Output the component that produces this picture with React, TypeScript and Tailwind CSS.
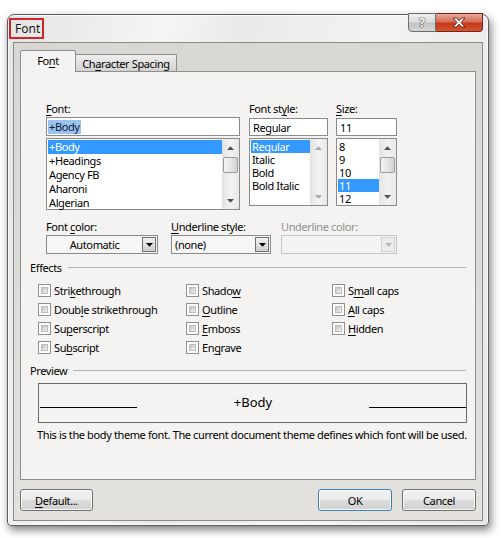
import React from "react";

type Kids = { children?: React.ReactNode };

// underlined access key letter
const Acc = ({ children }: Kids) => (
  <span className="underline decoration-1 underline-offset-[2px]">{children}</span>
);

function Arrow({ up, color = "#000" }: { up?: boolean; color?: string }) {
  return (
    <svg width="7" height="4" viewBox="0 0 7 4" className="block">
      <path d={up ? "M0 4H7L3.5 0.3Z" : "M0 0H7L3.5 3.7Z"} fill={color} />
    </svg>
  );
}

function ScrollBar({ thumb, disabled }: { thumb?: boolean; disabled?: boolean }) {
  const c = disabled ? "#a8a8a8" : "#505050";
  return (
    <div className="w-[17px] flex flex-col bg-gradient-to-r from-[#e3e3e3] via-[#f2f2f2] to-[#e9e9e9]">
      <div className="h-[17px] flex items-center justify-center">
        <Arrow up color={c} />
      </div>
      {thumb && (
        <div className="mx-px mt-px h-[16px] rounded-[2px] border border-[#9a9a9a] bg-gradient-to-r from-[#f4f4f4] via-[#e6e6e6] to-[#d3d3d3]" />
      )}
      <div className="flex-1" />
      <div className="h-[17px] flex items-center justify-center">
        <Arrow color={c} />
      </div>
    </div>
  );
}

function ListBox({
  items,
  selected,
  rowClass,
  boxClass,
  thumb,
  disabled,
}: {
  items: string[];
  selected: number;
  rowClass: string;
  boxClass: string;
  thumb?: boolean;
  disabled?: boolean;
}) {
  return (
    <div className={`flex border border-[#8a8a8a] bg-white mt-[2px] ${boxClass}`}>
      <div className="flex-1 flex flex-col pt-px">
        {items.map((it, i) => (
          <div
            key={it}
            className={`${rowClass} ml-px pl-[1px] flex items-center whitespace-nowrap ${
              i === selected ? "bg-[#3399ff] text-white" : ""
            }`}
          >
            {it}
          </div>
        ))}
      </div>
      <ScrollBar thumb={thumb} disabled={disabled} />
    </div>
  );
}

function Combo({
  text,
  center,
  disabled,
  className,
}: {
  text?: string;
  center?: boolean;
  disabled?: boolean;
  className: string;
}) {
  return (
    <div
      className={`h-[19px] flex items-center border ${
        disabled ? "border-[#c6c6c6] bg-[#f3f3f3]" : "border-[#8a8a8a] bg-[#f6f6f6]"
      } ${className}`}
    >
      <div className={`flex-1 px-[3px] ${center ? "text-center" : ""}`}>{text}</div>
      <div
        className={`mr-px w-[14px] h-[15px] flex items-center justify-center border ${
          disabled
            ? "border-[#d2d2d2] bg-[#ececec]"
            : "border-[#707070] bg-gradient-to-b from-[#f3f3f3] to-[#cdcdcd]"
        }`}
      >
        <Arrow color={disabled ? "#b4b4b4" : "#000"} />
      </div>
    </div>
  );
}

function Check({ children }: Kids) {
  return (
    <div className="h-[19px] flex items-center">
      <span className="w-[13px] h-[13px] border border-[#8e8f8f] bg-white p-[2px] flex">
        <span className="flex-1 border border-[#bdbdbd] bg-gradient-to-br from-[#c2c2c2] to-[#f2f2f2]" />
      </span>
      <span className="ml-[3px]">{children}</span>
    </div>
  );
}

function GroupHead({ title, className }: { title: string; className: string }) {
  return (
    <div className={`h-[13px] flex items-center pl-[9px] pr-[9px] ${className}`}>
      <span>{title}</span>
      <span className="flex-1 ml-[6px] h-px bg-[#b2b2b2]" />
    </div>
  );
}

function Button({ children, className }: Kids & { className: string }) {
  return (
    <div
      className={`h-[22px] flex items-center justify-center rounded-[3px] border shadow-[inset_0_0_0_1px_rgba(255,255,255,0.85)] bg-[linear-gradient(#f2f2f2_0%,#ebebeb_48%,#dddddd_52%,#cfcfcf_100%)] ${className}`}
    >
      {children}
    </div>
  );
}

export default function App() {
  return (
    <div className="w-[501px] h-[538px] bg-white pl-[7px] pt-[14px] font-['Segoe_UI','Noto_Sans',sans-serif] text-[11px] leading-[13px] tracking-[-0.38px] text-black">
      {/* window frame */}
      <div className="w-[482px] h-[512px] flex flex-col rounded-t-[7px] rounded-b-[4px] border border-[#5c5c5c] px-[5px] pb-[4px] bg-[linear-gradient(100deg,#e4e4e4_0%,#f5f5f5_28%,#e9e9e9_42%,#f3f3f3_66%,#e6e6e6_100%)] shadow-[inset_0_0_0_1px_rgba(255,255,255,0.75),2px_4px_8px_rgba(0,0,0,0.5)]">
        {/* title bar */}
        <div className="h-[27px] flex items-start justify-between">
          <div className="-ml-[4px] mt-[3px] w-[35px] h-[21px] border-2 border-[#d4242a] flex items-center pl-[4px] text-[12px] tracking-normal text-[#1a1a1a]">
            Font
          </div>
          <div className="-mt-[2px] flex">
            <div className="w-[28px] h-[19px] flex items-center justify-center rounded-bl-[4px] border border-[#6b6b6b] bg-[linear-gradient(#eeeeee_0%,#dcdcdc_45%,#c2c2c2_55%,#d6d6d6_100%)] text-[13px] font-bold text-white [text-shadow:0_0_1px_#333,0_0_1px_#333,0_0_1px_#333]">
              ?
            </div>
            <div className="w-[47px] h-[19px] flex items-center justify-center rounded-br-[4px] border border-l-0 border-[#6b2a1e] bg-[linear-gradient(#e9a999_0%,#d66e55_45%,#c2391c_55%,#d9532d_100%)]">
              <svg width="14" height="11" viewBox="0 0 14 11">
                <path
                  d="M1 1H4.5L7 3.8L9.5 1H13L9 5.5L13 10H9.5L7 7.2L4.5 10H1L5 5.5Z"
                  fill="#fff"
                  stroke="#5e1d12"
                  strokeWidth="0.9"
                  strokeLinejoin="round"
                />
              </svg>
            </div>
          </div>
        </div>

        {/* client area */}
        <div className="flex-1 flex flex-col border border-[#8a8a8a] bg-[linear-gradient(#d9d7d3,#e3e1dd)] pt-[7px]">
          {/* tabs */}
          <div className="h-[21px] flex items-end px-[6px]">
            <div className="relative z-10 -mb-px w-[56px] h-[22px] flex items-center justify-center border border-b-0 border-[#8e8f8f] rounded-t-[2px] bg-[#f4f3f1] pb-[2px]">
              <span>
                Fo<Acc>n</Acc>t
              </span>
            </div>
            <div className="-ml-px w-[102px] h-[17px] flex items-center justify-center border border-b-0 border-[#8e8f8f] rounded-t-[2px] bg-[linear-gradient(#efefef,#d3d2d0)]">
              <span>
                Ch<Acc>a</Acc>racter Spacing
              </span>
            </div>
          </div>

          {/* tab page */}
          <div className="mx-[6px] h-[409px] border border-[#8e8f8f] bg-[#f4f3f1] flex flex-col">
            <div className="pl-[25px] pt-[30px] flex">
              <div className="w-[194px] flex flex-col">
                <div className="h-[15px]">
                  <Acc>F</Acc>ont:
                </div>
                <div className="h-[19px] border border-[#8a8a8a] bg-white flex items-center pl-px">
                  <span className="bg-[#9cc3ee] text-[#0b1a33] px-[1px] leading-[14px]">+Body</span>
                </div>
                <ListBox
                  items={["+Body", "+Headings", "Agency FB", "Aharoni", "Algerian"]}
                  selected={0}
                  rowClass="h-[14px]"
                  boxClass="h-[72px]"
                  thumb
                />
              </div>
              <div className="ml-[9px] w-[79px] flex flex-col">
                <div className="h-[16px]">
                  Font st<Acc>y</Acc>le:
                </div>
                <div className="h-[18px] border border-[#8a8a8a] bg-white flex items-center pl-[3px]">
                  Regular
                </div>
                <ListBox
                  items={["Regular", "Italic", "Bold", "Bold Italic"]}
                  selected={0}
                  rowClass="h-[13px]"
                  boxClass="h-[68px]"
                  disabled
                />
              </div>
              <div className="ml-[8px] w-[61px] flex flex-col">
                <div className="h-[16px]">
                  <Acc>S</Acc>ize:
                </div>
                <div className="h-[18px] border border-[#8a8a8a] bg-white flex items-center pl-[3px]">
                  11
                </div>
                <ListBox
                  items={["8", "9", "10", "11", "12"]}
                  selected={3}
                  rowClass="h-[13px]"
                  boxClass="h-[68px]"
                  thumb
                />
              </div>
            </div>

            {/* color / underline row */}
            <div className="pl-[25px] mt-[10px] flex">
              <div className="w-[112px] flex flex-col">
                <div className="h-[15px]">
                  Font <Acc>c</Acc>olor:
                </div>
                <Combo text="Automatic" center className="w-[112px]" />
              </div>
              <div className="ml-[13px] w-[100px] flex flex-col">
                <div className="h-[15px]">
                  <Acc>U</Acc>nderline style:
                </div>
                <Combo text="(none)" className="w-[100px]" />
              </div>
              <div className="ml-[10px] w-[116px] flex flex-col">
                <div className="h-[15px] text-[#8f8f8f]">Underline color:</div>
                <Combo disabled className="w-[116px]" />
              </div>
            </div>

            <GroupHead title="Effects" className="mt-[7px]" />

            <div className="mt-[7px] pl-[17px] grid grid-cols-[148px_146px_1fr]">
              <div className="flex flex-col">
                <Check>
                  Stri<Acc>k</Acc>ethrough
                </Check>
                <Check>
                  Doub<Acc>l</Acc>e strikethrough
                </Check>
                <Check>
                  Su<Acc>p</Acc>erscript
                </Check>
                <Check>
                  Su<Acc>b</Acc>script
                </Check>
              </div>
              <div className="flex flex-col">
                <Check>
                  Shado<Acc>w</Acc>
                </Check>
                <Check>
                  <Acc>O</Acc>utline
                </Check>
                <Check>
                  <Acc>E</Acc>mboss
                </Check>
                <Check>
                  En<Acc>g</Acc>rave
                </Check>
              </div>
              <div className="flex flex-col">
                <Check>
                  S<Acc>m</Acc>all caps
                </Check>
                <Check>
                  <Acc>A</Acc>ll caps
                </Check>
                <Check>
                  <Acc>H</Acc>idden
                </Check>
              </div>
            </div>

            <GroupHead title="Preview" className="mt-[7px]" />

            <div className="mt-[6px] ml-[17px] w-[429px] h-[40px] border border-[#6a6a6a] flex items-start">
              <div className="ml-px mt-[23px] w-[97px] h-px bg-black" />
              <div className="flex-1 mt-[10px] text-center text-[13px] leading-[16px] tracking-normal">+Body</div>
              <div className="mt-[23px] w-[97px] h-px bg-black" />
            </div>

            <div className="mt-[5px] pl-[16px] h-[13px] whitespace-nowrap">
              This is the body theme font. The current document theme defines which font will be used.
            </div>
          </div>

          {/* dialog buttons */}
          <div className="mt-[9px] px-[6px] flex">
            <Button className="w-[73px] border-[#707070]">
              <span>
                <Acc>D</Acc>efault...
              </span>
            </Button>
            <div className="flex-1" />
            <Button className="w-[74px] border-[#3c7fb1] shadow-[inset_0_0_0_1px_#bfe3f7]">OK</Button>
            <Button className="ml-[10px] w-[74px] border-[#707070]">Cancel</Button>
          </div>
        </div>
      </div>
    </div>
  );
}
